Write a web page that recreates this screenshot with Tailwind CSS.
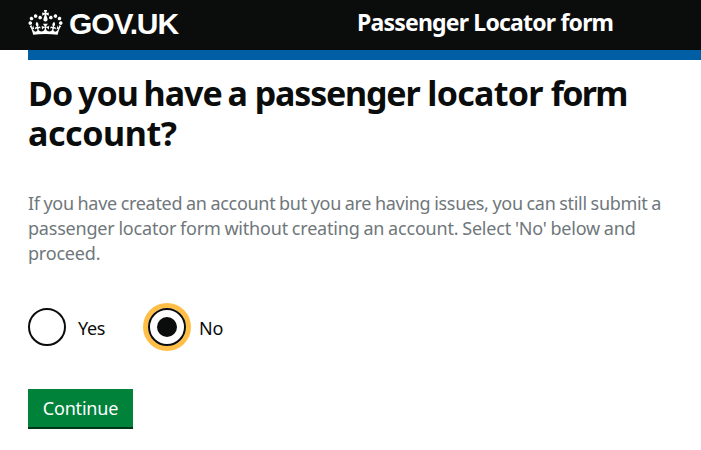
<!DOCTYPE html>
<html lang="en">

<head>
  <meta charset="utf-8">
  <title>Do you have a passenger locator form account?</title>
  <meta name="viewport" content="width=device-width,initial-scale=1">
  <script src="https://cdn.jsdelivr.net/npm/@tailwindcss/browser@4"></script>
</head>

<body class="h-[450px] overflow-hidden bg-white font-['Noto_Sans',sans-serif] text-[#0b0c0c]">
  <header class="flex h-[50px] items-start bg-[#0b0c0c] pl-7 text-white">
    <a href="#" class="flex w-[329px] items-start">
      <svg xmlns="http://www.w3.org/2000/svg" viewBox="0 0 132 97" fill="currentColor" class="mt-[10px] h-[25px] w-[35px]" aria-hidden="true">
        <path fill-rule="evenodd"
          d="M25 30.2c3.5 1.5 7.7-.2 9.1-3.7 1.5-3.6-.2-7.8-3.9-9.2-3.6-1.4-7.6.3-9.1 3.9-1.4 3.5.3 7.5 3.9 9zM9 39.5c3.6 1.5 7.8-.2 9.2-3.7 1.5-3.6-.2-7.8-3.9-9.1-3.6-1.5-7.6.2-9.1 3.8-1.4 3.5.3 7.5 3.8 9zM4.4 57.2c3.5 1.5 7.7-.2 9.1-3.8 1.5-3.6-.2-7.7-3.9-9.1-3.5-1.5-7.6.3-9.1 3.8-1.4 3.5.3 7.6 3.9 9.1zm38.3-21.4c3.5 1.5 7.7-.2 9.1-3.8 1.5-3.6-.2-7.7-3.9-9.1-3.6-1.5-7.6.3-9.1 3.8-1.3 3.6.4 7.7 3.9 9.1zm64.4-5.6c-3.6 1.5-7.8-.2-9.1-3.7-1.5-3.6.2-7.8 3.8-9.2 3.6-1.4 7.7.3 9.2 3.9 1.3 3.5-.4 7.5-3.9 9zm15.9 9.3c-3.6 1.5-7.7-.2-9.1-3.7-1.5-3.6.2-7.8 3.7-9.1 3.6-1.5 7.7.2 9.2 3.8 1.5 3.5-.3 7.5-3.8 9zm4.7 17.7c-3.6 1.5-7.8-.2-9.2-3.8-1.5-3.6.2-7.7 3.9-9.1 3.6-1.5 7.7.3 9.2 3.8 1.3 3.5-.4 7.6-3.9 9.1zM89.3 35.8c-3.6 1.5-7.8-.2-9.2-3.8-1.4-3.6.2-7.7 3.9-9.1 3.6-1.5 7.7.3 9.2 3.8 1.4 3.6-.3 7.7-3.9 9.1zM69.7 17.7l8.9 4.7V9.3l-8.9 2.8c-.2-.3-.5-.6-.9-.9L72.4 0H59.6l3.5 11.2c-.3.3-.6.5-.9.9l-8.8-2.8v13.1l8.8-4.7c.3.3.6.7.9.9l-5 15.4v.1c-.2.8-.4 1.6-.4 2.4 0 4.1 3.1 7.5 7 8.1h.2c.3 0 .7.1 1 .1.4 0 .7 0 1-.1h.2c4-.6 7.1-4.1 7.1-8.1 0-.8-.1-1.7-.4-2.4V34l-5.1-15.4c.4-.2.7-.6 1-.9zM66 92.8c16.9 0 32.8 1.1 47.1 3.2 4-16.9 8.9-26.7 14-33.5l-9.6-3.4c1 4.9 1.1 7.2 0 10.2-1.5-1.4-3-4.3-4.2-8.7L108.6 76c2.8-2 5-3.2 7.5-3.3-4.4 9.4-10 11.9-13.6 11.2-4.3-.8-6.3-4.6-5.6-7.9 1-4.7 5.7-5.9 8-.5 4.3-8.7-3-11.4-7.6-8.8 7.1-7.2 7.9-13.5 2.1-21.1-8 6.1-8.1 12.3-4.5 20.8-4.7-5.4-12.1-2.5-9.5 6.2 3.4-5.2 7.9-2 7.2 3.1-.6 4.3-6.4 7.8-13.5 7.2-10.3-.9-10.9-8-11.2-13.8 2.5-.5 7.1 1.8 11 7.3L80.2 60c-4.1 4.4-8 5.3-12.3 5.4 1.4-4.4 8-11.6 8-11.6H55.5s6.4 7.2 7.9 11.6c-4.2-.1-8-1-12.3-5.4l1.4 16.4c3.9-5.5 8.5-7.7 10.9-7.3-.3 5.8-.9 12.8-11.1 13.8-7.2.6-12.9-2.9-13.5-7.2-.7-5 3.8-8.3 7.1-3.1 2.7-8.7-4.6-11.6-9.4-6.2 3.7-8.5 3.6-14.7-4.6-20.8-5.8 7.6-5 13.9 2.2 21.1-4.7-2.6-11.9.1-7.7 8.8 2.3-5.5 7.1-4.2 8.1.5.7 3.3-1.3 7.1-5.7 7.9-3.5.7-9-1.8-13.5-11.2 2.5.1 4.7 1.3 7.5 3.3l-4.7-15.4c-1.2 4.4-2.7 7.2-4.3 8.7-1.1-3-.9-5.3 0-10.2l-9.5 3.4c5 6.9 9.9 16.7 14 33.5 14.8-2.1 30.8-3.2 47.7-3.2z"
          clip-rule="evenodd" />
      </svg>
      <span class="ml-[6px] mt-[8px] font-['Liberation_Sans',sans-serif] text-[30px] leading-[31px] font-bold tracking-[-1.1px]">GOV.UK</span>
    </a>
    <a href="#" class="mt-[7px] text-[23px] leading-[30px] font-bold tracking-[-0.8px] whitespace-nowrap">Passenger Locator form</a>
  </header>
  <div class="ml-7 h-[10px] bg-[#005ea5]"></div>

  <main class="pl-7">
    <h1 class="pt-[13px] text-[34px] leading-[40px] font-bold whitespace-nowrap">
      <span class="block [word-spacing:-1px]">
        <span class="tracking-[-1px] [word-spacing:-2px]">Do you have a</span>
        <span class="tracking-[-1.2px]">passenger</span>
        <span class="tracking-[-0.7px]">locator</span>
        <span class="tracking-[-1.7px]">form</span>
      </span>
      <span class="block tracking-[-0.4px]">account?</span>
    </h1>

    <p class="mt-[38px] text-[18px] leading-[25px] whitespace-nowrap text-[#6f777b]">
      <span class="block tracking-[-0.3px] [word-spacing:-0.6px]">If you have created an account but you are having issues, you can still submit a</span>
      <span class="block tracking-[-0.2px] [word-spacing:-0.6px]">passenger locator form without creating an account. Select 'No' below and</span>
      <span class="block tracking-[-0.2px]">proceed.</span>
    </p>

    <form>
      <div class="mt-[42px] flex text-[18px] leading-[25px]">
        <label class="flex h-[38px] w-[120px] items-center">
          <span class="size-[38px] rounded-full border-2 border-[#0b0c0c]"></span>
          <span class="ml-3 mt-[2px] tracking-[-0.3px]">Yes</span>
        </label>
        <label class="flex h-[38px] items-center">
          <span class="flex size-[38px] items-center justify-center rounded-full border-2 border-[#0b0c0c] ring-5 ring-[#ffbf47]">
            <span class="size-5 rounded-full bg-[#0b0c0c]"></span>
          </span>
          <span class="ml-[13px] mt-[2px] tracking-[-0.3px]">No</span>
        </label>
      </div>
      <button type="button" class="mt-[43px] flex h-[40px] w-[105px] items-center justify-center border-b-2 border-[#003618] bg-[#00823b] text-[18px] leading-[25px] tracking-[-0.2px] text-white">Continue</button>
    </form>
  </main>
</body>

</html>
